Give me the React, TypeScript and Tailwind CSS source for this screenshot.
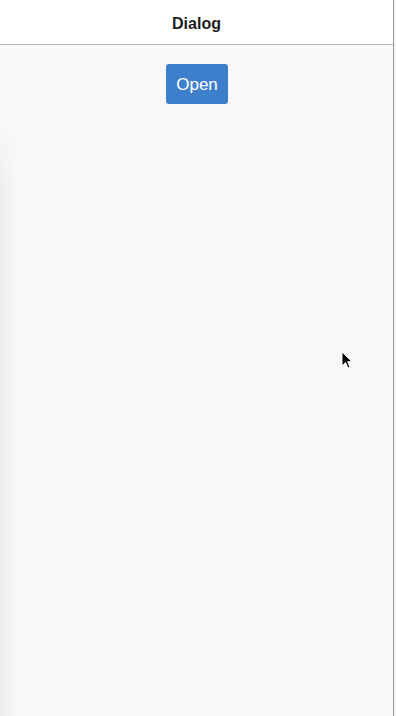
import React from "react";

export default function App() {
  return (
    <div
      className="relative flex h-[716px] w-[396px] overflow-hidden bg-[#f4f4f4]"
      style={{ fontFamily: '"Liberation Sans", Arial, sans-serif' }}
    >
      <div className="relative flex h-full w-[394px] flex-col border-r-[1px] border-[#9c9c9c] bg-[#f8f8f8]">
        <header className="flex h-[45px] shrink-0 items-center justify-center border-b border-[#b4b4b4] bg-white pt-[3px]">
          <span className="text-[16px] font-bold leading-none text-[#1d1d1d]">Dialog</span>
        </header>
        <div className="flex justify-center pl-[1px] pt-[19px]">
          <button className="h-[40px] rounded-[3px] bg-[#3e7fcb] px-[10px] text-[17px] leading-none text-white">
            Open
          </button>
        </div>
        <div className="pointer-events-none absolute bottom-0 left-0 top-[130px] w-[16px] bg-gradient-to-r from-[#ededed] to-transparent [mask-image:linear-gradient(to_bottom,transparent,black_60px)]" />
      </div>
      <svg
        className="pointer-events-none absolute left-[341px] top-[351px]"
        width="12"
        height="19"
        viewBox="0 0 12 19"
      >
        <path
          d="M1 1 L1 15 L4.5 11.5 L7 17 L9 16 L6.6 10.7 L11 10.7 Z"
          fill="#000"
          stroke="#fff"
          strokeWidth="1"
          strokeLinejoin="round"
        />
      </svg>
    </div>
  );
}
